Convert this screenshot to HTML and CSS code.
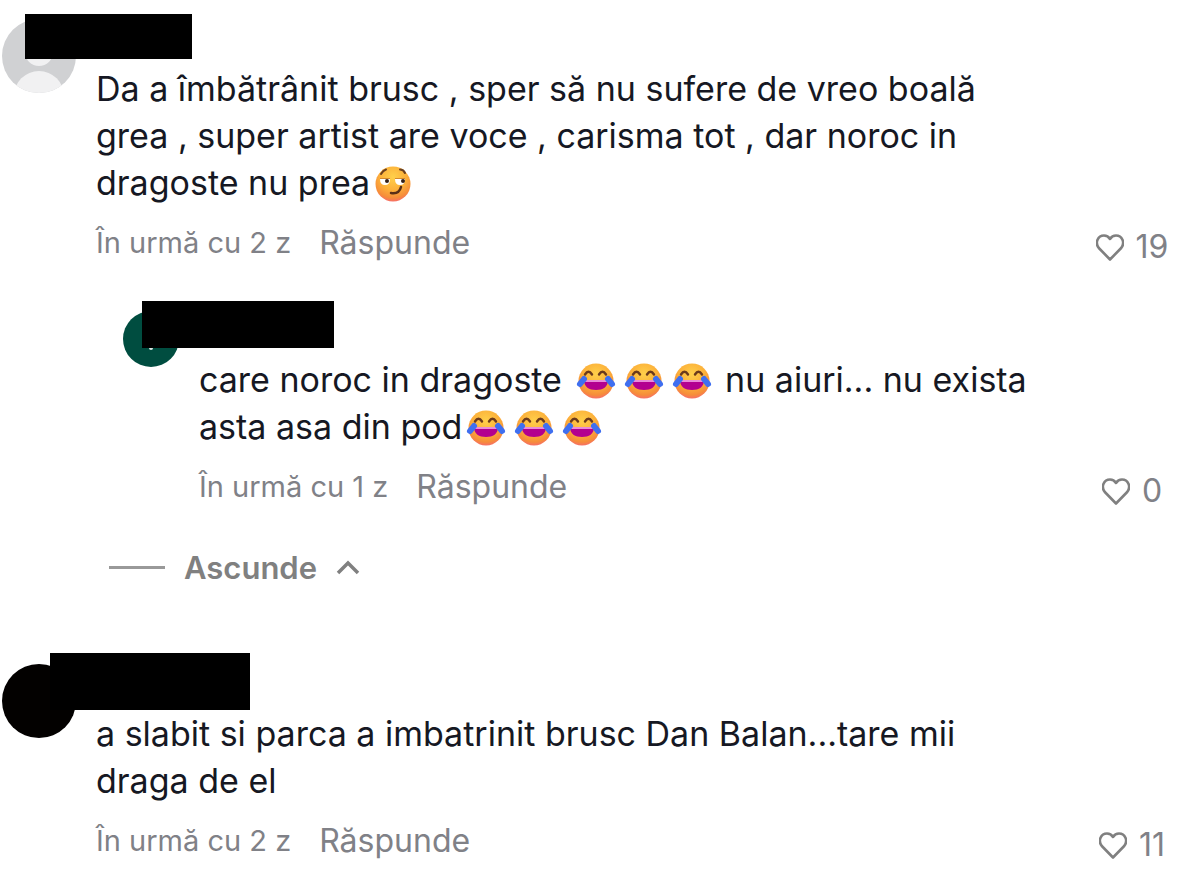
FILE: index.html
```html
<!DOCTYPE html>
<html lang="ro">
<head>
<meta charset="utf-8">
<meta name="viewport" content="width=device-width, initial-scale=1">
<title>Comentarii</title>
<link rel="stylesheet" href="styles.css">
</head>
<body>
<svg class="defs" aria-hidden="true">
  <defs>
    <radialGradient id="skin" cx="50%" cy="30%" r="75%">
      <stop offset="0" stop-color="#ffd04a"/>
      <stop offset=".5" stop-color="#fcb03a"/>
      <stop offset=".8" stop-color="#f68c3a"/>
      <stop offset="1" stop-color="#f7607d"/>
    </radialGradient>
    <symbol id="joy" viewBox="0 0 48 40">
      <circle cx="24" cy="20" r="17.5" fill="url(#skin)"/>
      <path d="M13 13.500q3.500-5.500 7 0M27 13.500q3.500-5.500 7 0" fill="none" stroke="#6b3a1c" stroke-width="2.400" stroke-linecap="round"/>
      <path d="M12 19h24c0 7-5 10-12 10S12 26 12 19z" fill="#b3008f"/>
      <path d="M13 19h22v2H13z" fill="#e98bd8"/>
      <path d="M12 18 8 23M36 18l4 5" fill="none" stroke="#3f6ff0" stroke-width="6" stroke-linecap="round"/>
    </symbol>
    <symbol id="smirk" viewBox="0 0 48 40">
      <circle cx="23" cy="20" r="17.500" fill="url(#skin)"/>
      <path d="M11 10q2-3.500 5-4.500M30 5.500q3.500 0 5 3.500" fill="none" stroke="#6b4020" stroke-width="2" stroke-linecap="round"/>
      <path d="M21 29c6 1 9-2 10-6" fill="none" stroke="#5a3018" stroke-width="2.500" stroke-linecap="round"/>
      <path d="M10 15h10q0 6-5 6t-5-6zM25 15h10q0 6-5 6t-5-6z" fill="#fff"/>
      <path d="M10 14.500h10M25 14.500h10" stroke="#d3892c" stroke-width="1"/>
      <circle cx="17" cy="17" r="2" fill="#342018"/>
      <circle cx="33" cy="17" r="2" fill="#342018"/>
    </symbol>
    <symbol id="heart" viewBox="0 0 28 28">
      <path d="M14 26.500 2.800 15C-1.500 9.500 2 2.500 8 2.500c2.500 0 4.700 1.300 6 3.500 1.300-2.200 3.500-3.500 6-3.500 6 0 9.500 7 5.200 12.500z" fill="none" stroke="#808080" stroke-width="2.600" stroke-linejoin="round"/>
    </symbol>
  </defs>
</svg>

<main class="comments">
  <article class="comment">
    <svg class="avatar" viewBox="0 0 76 76" aria-hidden="true">
      <clipPath id="round"><circle cx="38" cy="38" r="37"/></clipPath>
      <g clip-path="url(#round)">
        <path d="M0 0h76v76H0z" fill="#d0d1d3"/>
        <circle cx="38" cy="34" r="14" fill="#f1f1f2"/>
        <ellipse cx="38" cy="78" rx="25" ry="25" fill="#f1f1f2"/>
      </g>
    </svg>
    <span class="mask mask-first"></span>
    <div class="body">
      <p class="text">Da a îmbătrânit brusc , sper să nu sufere de vreo boală<br>grea , super artist are voce , carisma tot , dar noroc in<br>dragoste nu prea<svg class="emoji" role="img" aria-label="😏"><use href="#smirk"/></svg></p>
      <footer class="meta">
        <time>În urmă cu 2 z</time>
        <button class="reply-button" type="button">Răspunde</button>
        <button class="like" type="button"><svg class="heart" aria-hidden="true"><use href="#heart"/></svg>19</button>
      </footer>
    </div>
  </article>

  <article class="comment comment-reply">
    <svg class="avatar" viewBox="0 0 56 56" aria-hidden="true">
      <circle cx="28" cy="28" r="28" fill="#004d40"/>
      <circle cx="28" cy="37" r="2" fill="#dfeae8"/>
    </svg>
    <span class="mask mask-reply"></span>
    <div class="body">
      <p class="text">care noroc in dragoste <svg class="emoji" role="img" aria-label="😂"><use href="#joy"/></svg><svg class="emoji" role="img" aria-label="😂"><use href="#joy"/></svg><svg class="emoji" role="img" aria-label="😂"><use href="#joy"/></svg> nu aiuri... nu exista<br>asta asa din pod<svg class="emoji" role="img" aria-label="😂"><use href="#joy"/></svg><svg class="emoji" role="img" aria-label="😂"><use href="#joy"/></svg><svg class="emoji" role="img" aria-label="😂"><use href="#joy"/></svg></p>
      <footer class="meta">
        <time>În urmă cu 1 z</time>
        <button class="reply-button" type="button">Răspunde</button>
        <button class="like" type="button"><svg class="heart" aria-hidden="true"><use href="#heart"/></svg>0</button>
      </footer>
    </div>
  </article>

  <button class="toggle" type="button">
    <span class="rule"></span>
    Ascunde
    <svg class="chevron" viewBox="0 0 24 16" aria-hidden="true"><path d="M2 14 12 4l10 10" fill="none" stroke="#808080" stroke-width="3.500"/></svg>
  </button>

  <article class="comment">
    <svg class="avatar" viewBox="0 0 76 76" aria-hidden="true"><circle cx="38" cy="38" r="37" fill="#030100"/></svg>
    <span class="mask mask-last"></span>
    <div class="body">
      <p class="text">a slabit si parca a imbatrinit brusc Dan Balan...tare mii<br>draga de el</p>
      <footer class="meta">
        <time>În urmă cu 2 z</time>
        <button class="reply-button" type="button">Răspunde</button>
        <button class="like" type="button"><svg class="heart" aria-hidden="true"><use href="#heart"/></svg>11</button>
      </footer>
    </div>
  </article>
</main>
</body>
</html>
```
FILE: styles.css
```css
* {
  box-sizing: border-box;
}

body {
  margin: 0;
  background: #fff;
  color: #161823;
  font-family: Inter, "Liberation Sans", Arial, sans-serif;
}

button {
  padding: 0;
  border: 0;
  background: none;
  color: inherit;
  font: inherit;
  cursor: pointer;
}

.defs {
  position: absolute;
  width: 0;
  height: 0;
}

.comment {
  position: relative;
  display: grid;
  grid-template-columns: 96px 1fr;
  align-items: start;
}

.comment-reply {
  grid-template-columns: 103px 1fr;
  margin-left: 96px;
}

.avatar {
  width: 76px;
  height: 76px;
  margin: 18px 0 0 1px;
}

.comment-reply .avatar {
  width: 56px;
  height: 56px;
  margin: 40px 0 0 27px;
}

/* Opaque blocks that hide the user names */
.mask {
  position: absolute;
  background: #000;
}

.mask-first {
  top: 14px;
  left: 25px;
  width: 167px;
  height: 45px;
}

.mask-reply {
  top: 30px;
  left: 46px;
  width: 192px;
  height: 47px;
}

.mask-last {
  top: 8px;
  left: 50px;
  width: 200px;
  height: 57px;
}

.body {
  padding-top: 65px;
}

.comment-reply .body {
  padding-top: 85px;
}

.text {
  margin: 0;
  font-size: 34px;
  font-weight: 400;
  line-height: 47px;
  white-space: nowrap;
}

.emoji {
  width: 48px;
  height: 40px;
  margin: -4px 0;
  vertical-align: -5px;
}

.meta {
  display: flex;
  align-items: flex-start;
  gap: 28px;
  margin-top: 17px;
  color: #808187;
  font-size: 32px;
  line-height: 40px;
}

.meta time {
  font-size: 29px;
}

.like {
  display: flex;
  align-items: center;
  justify-content: center;
  gap: 12px;
  width: 136px;
  height: 48px;
  margin-left: auto;
}

.heart {
  width: 28px;
  height: 28px;
}

.toggle {
  display: flex;
  align-items: center;
  gap: 19px;
  height: 40px;
  margin: 32px 0 58px 109px;
  color: #808080;
  font-size: 31px;
  font-weight: 600;
}

.rule {
  width: 56px;
  height: 3px;
  background: #999;
}

.chevron {
  width: 24px;
  height: 16px;
}
```
